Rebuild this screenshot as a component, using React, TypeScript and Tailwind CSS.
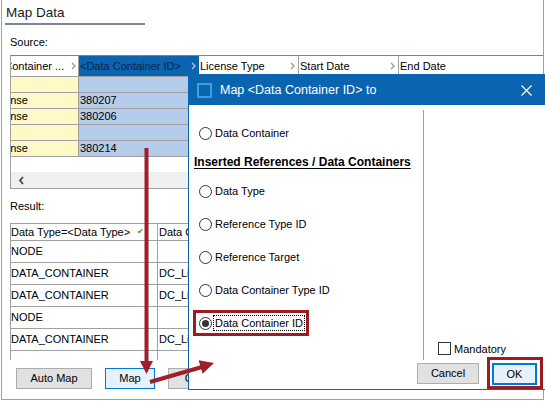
import React from 'react';

const gridLine = 'border-[#a0a0a0]';

const sourceRows = [
  { a: '', b: '' },
  { a: 'License', b: '380207' },
  { a: 'License', b: '380206' },
  { a: '', b: '' },
  { a: 'License', b: '380214' },
];

const resultRows = [
  { type: 'NODE', dc: '' },
  { type: 'DATA_CONTAINER', dc: 'DC_License' },
  { type: 'DATA_CONTAINER', dc: 'DC_License' },
  { type: 'NODE', dc: '' },
  { type: 'DATA_CONTAINER', dc: 'DC_License' },
];

const Chevron = ({ className = '' }: { className?: string }) => (
  <svg width="6" height="8" viewBox="0 0 6 8" className={className}>
    <path d="M1 1 L4 4 L1 7" fill="none" stroke="currentColor" strokeWidth="1.4" />
  </svg>
);

const Radio = ({ label, checked = false, focus = false }: { label: string; checked?: boolean; focus?: boolean }) => (
  <div className="flex items-center h-[16px] pl-[10px]">
    <span className="w-[13px] h-[13px] rounded-full border border-[#333] bg-white flex items-center justify-center shrink-0">
      {checked && <span className="w-[7px] h-[7px] rounded-full bg-[#333]" />}
    </span>
    <span className={`ml-[2px] px-[1px] leading-[14px] ${focus ? 'outline-1 outline-dotted outline-black' : ''}`}>{label}</span>
  </div>
);

export default function App() {
  return (
    <div className="relative w-[545px] h-[401px] overflow-hidden bg-white text-black text-[11px] font-['Liberation_Sans',Arial,sans-serif]">
      <div className="ml-px w-[543px] h-[400px] border-x border-b border-[#a0a0a0] flex flex-col">
        {/* title */}
        <div className="h-[23px] pt-[4px] pl-[4px] text-[13.5px] leading-[17px] text-[#1a1a1a]">Map Data</div>
        <div className="h-[2px] w-[140px] ml-[3px] bg-[#7b8595]" />

        <div className="h-[30px] pt-[10px] pl-[8px] leading-[14px]">Source:</div>

        {/* source grid */}
        <div className={`ml-[8px] h-[134px] border-l border-b ${gridLine} overflow-hidden flex flex-col`}>
          <div className="h-[22px] border-t border-b border-t-[#808080] border-b-[#a0a0a0] flex shrink-0">
            <div className={`w-[68px] shrink-0 flex items-center overflow-hidden border-r ${gridLine} bg-white`}>
              <span className="whitespace-nowrap ml-[-33px]">Data Container ...</span>
              <Chevron className="ml-auto mr-[1px] text-[#9a9a9a] shrink-0" />
            </div>
            <div className="w-[120px] shrink-0 flex items-center bg-[#0a64b0] text-[#0d2340] pl-[1px] overflow-hidden">
              <span className="whitespace-nowrap">&lt;Data Container ID&gt;</span>
              <Chevron className="ml-auto mr-[2px] text-[#a9c4e4] shrink-0" />
            </div>
            <div className={`w-[100px] shrink-0 flex items-center border-r ${gridLine} pl-[1px]`}>
              <span className="whitespace-nowrap">License Type</span>
              <Chevron className="ml-auto mr-[2px] text-[#9a9a9a]" />
            </div>
            <div className={`w-[100px] shrink-0 flex items-center border-r ${gridLine} pl-[1px]`}>
              <span className="whitespace-nowrap">Start Date</span>
              <Chevron className="ml-auto mr-[2px] text-[#9a9a9a]" />
            </div>
            <div className="flex-1 flex items-center pl-[1px]">
              <span className="whitespace-nowrap">End Date</span>
            </div>
          </div>
          {sourceRows.map((r, i) => (
            <div key={i} className="h-[16px] flex shrink-0">
              <div className={`w-[68px] shrink-0 bg-[#fff9c8] border-r border-b ${gridLine} overflow-hidden flex items-center`}>
                {r.a && <span className="whitespace-nowrap ml-[-21px]">{r.a}</span>}
              </div>
              <div className={`w-[400px] shrink-0 bg-[#b4cbea] border-b ${gridLine} flex items-center pl-[1px]`}>
                {r.b}
              </div>
            </div>
          ))}
          <div className="h-[15px] shrink-0" />
          <div className="flex-1 bg-[#f0f0f0] flex items-center pl-[7px]">
            <svg width="7" height="9" viewBox="0 0 7 9">
              <path d="M5 1 L2 4.5 L5 8" fill="none" stroke="#444" strokeWidth="1.8" />
            </svg>
          </div>
        </div>

        <div className="h-[34px] pt-[10px] pl-[8px] leading-[14px]">Result:</div>

        {/* result grid */}
        <div className={`ml-[8px] h-[137px] border-l border-t ${gridLine} overflow-hidden flex flex-col`}>
          <div className={`h-[17px] flex shrink-0 border-b ${gridLine}`}>
            <div className={`w-[147px] shrink-0 border-r ${gridLine} flex items-center whitespace-nowrap`}>
              Data Type=&lt;Data Type&gt;
              <span className="ml-[7px] text-[#3b9a3b] text-[8px]">✔</span>
            </div>
            <div className="flex-1 flex items-center pl-[1px] whitespace-nowrap">Data Container</div>
          </div>
          {resultRows.map((r, i) => (
            <div key={i} className={`h-[22px] flex shrink-0 border-b ${gridLine}`}>
              <div className={`w-[147px] shrink-0 border-r ${gridLine} flex items-center`}>{r.type}</div>
              <div className="flex-1 flex items-center pl-[1px] whitespace-nowrap">{r.dc}</div>
            </div>
          ))}
          <div className="flex-1 flex">
            <div className={`w-[147px] border-r ${gridLine}`} />
          </div>
        </div>

        {/* buttons */}
        <div className="mt-[8px] pl-[14px] flex gap-[13px]">
          <button className="w-[76px] h-[21px] bg-[#e1e1e1] border border-[#adadad]">Auto Map</button>
          <button className="w-[50px] h-[21px] bg-[#e5f1fb] border border-[#0078d7]">Map</button>
          <button className="w-[60px] h-[21px] bg-[#e1e1e1] border border-[#adadad]">Clear</button>
        </div>
      </div>

      {/* dialog */}
      <div className="absolute left-[188px] top-[74px] w-[359px] h-[316px] border border-[#0a64b0] bg-white flex flex-col">
        <div className="h-[30px] bg-[#0a64b0] flex items-center shrink-0">
          <span className="ml-[8px] w-[15px] h-[15px] border-2 border-[#35a3d8]" />
          <span className="ml-[8px] text-white text-[12.5px] whitespace-nowrap">Map &lt;Data Container ID&gt; to</span>
          <svg width="11" height="11" viewBox="0 0 11 11" className="ml-auto mr-[14px]">
            <path d="M0.5 0.5 L10.5 10.5 M10.5 0.5 L0.5 10.5" stroke="white" strokeWidth="1.2" />
          </svg>
        </div>
        <div className="flex h-[255px]">
          <div className="w-[234px] shrink-0 flex flex-col pt-[20px]">
            <Radio label="Data Container" />
            <div className="mt-[13px] h-[16px] pl-[5px] text-[12px] font-bold underline underline-offset-2 leading-[16px] whitespace-nowrap">
              Inserted References / Data Containers
            </div>
            <div className="mt-[13px] flex flex-col gap-[17px]">
              <Radio label="Data Type" />
              <Radio label="Reference Type ID" />
              <Radio label="Reference Target" />
              <Radio label="Data Container Type ID" />
              <Radio label="Data Container ID" checked focus />
            </div>
          </div>
          <div className="w-px bg-[#a0a0a0] mt-[5px]" />
          <div className="flex-1 flex flex-col justify-end pb-[3px] pl-[14px]">
            <div className="flex items-center gap-[3px]">
              <span className="w-[13px] h-[13px] border border-[#333] bg-white" />
              <span>Mandatory</span>
            </div>
          </div>
        </div>
        <div className="flex pl-[228px] gap-[13px] mt-[3px]">
          <button className="w-[62px] h-[21px] bg-[#e1e1e1] border border-[#adadad]">Cancel</button>
          <button className="w-[45px] h-[22px] bg-[#e5f1fb] border-2 border-[#0078d7]">OK</button>
        </div>
      </div>

      {/* annotations */}
      <div className="absolute left-[193px] top-[310px] w-[116px] h-[26px] border-[3px] border-[#9e1b22]" />
      <div className="absolute left-[487px] top-[357px] w-[56px] h-[32px] border-[3px] border-[#9e1b22]" />
      <svg className="absolute left-0 top-0 pointer-events-none" width="545" height="401">
        <line x1="146.5" y1="148" x2="146.5" y2="363" stroke="#a11d27" strokeWidth="4" />
        <polygon points="140,361 153,361 146.5,374" fill="#a11d27" />
        <line x1="150" y1="382" x2="202" y2="367" stroke="#a11d27" strokeWidth="4" />
        <polygon points="202.6,373.7 198.6,360.3 214,363" fill="#a11d27" />
      </svg>
    </div>
  );
}
